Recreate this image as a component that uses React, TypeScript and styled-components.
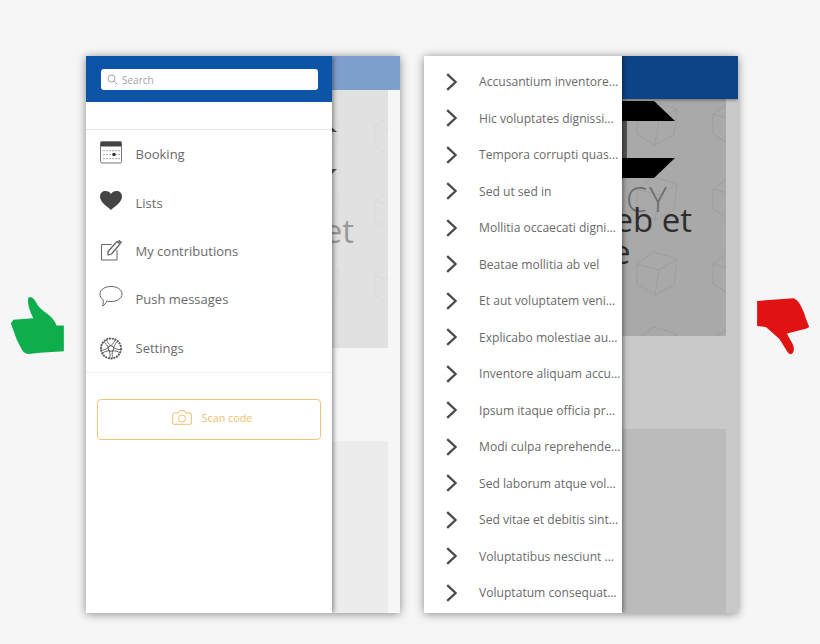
import React from "react";
import styled, { createGlobalStyle } from "styled-components";

const Global = createGlobalStyle`
  html, body { margin: 0; padding: 0; background: #f6f6f6; }
  body { font-family: "Open Sans", "Liberation Sans", sans-serif; }
`;

const Stage = styled.div`
  width: 820px;
  height: 644px;
  overflow: hidden;
  display: flex;
  align-items: flex-start;
  padding: 56px 0 0 10px;
  box-sizing: border-box;
`;
const ThumbUp = styled.svg`
  width: 55px;
  height: 59px;
  margin: 240px 21px 0 0;
  flex: none;
`;
const ThumbDown = styled.svg`
  width: 54px;
  height: 58px;
  margin: 241px 0 0 18px;
  flex: none;
`;
const Phone = styled.div<{ $dark?: boolean }>`
  position: relative;
  width: 314px;
  height: 557px;
  flex: none;
  overflow: hidden;
  display: flex;
  flex-direction: column;
  background: ${(p) => (p.$dark ? "#c9c9c9" : "#f6f6f6")};
`;
const PhoneFrame = styled.div<{ $gap?: boolean }>`
  flex: none;
  margin-right: ${(p) => (p.$gap ? "24px" : "0")};
  box-shadow: 0 1px 9px rgba(0, 0, 0, 0.45);
`;
const AppHeader = styled.div<{ $dark?: boolean }>`
  flex: none;
  height: ${(p) => (p.$dark ? "43px" : "34px")};
  background: ${(p) => (p.$dark ? "#0d4488" : "#7f9fcb")};
  box-shadow: ${(p) => (p.$dark ? "0 1px 3px rgba(0,0,0,.4)" : "none")};
  position: relative;
  z-index: 1;
`;
const Hero = styled.div<{ $dark?: boolean }>`
  flex: none;
  position: relative;
  overflow: hidden;
  margin: 0 12px;
  height: ${(p) => (p.$dark ? "237px" : "258px")};
  background: ${(p) => (p.$dark ? "#a9a9a9" : "#e1e1e1")};
  padding-top: ${(p) => (p.$dark ? "2px" : "22px")};
  box-sizing: border-box;
`;
const Cubes = styled.svg<{ $dark?: boolean }>`
  position: absolute;
  left: 0;
  top: ${(p) => (p.$dark ? "3px" : "24px")};
  width: 302px;
  height: 300px;
`;
const Logo = styled.svg`
  position: relative;
  display: block;
  width: 130px;
  height: 77px;
  margin-left: 109px;
`;
const Brand = styled.div<{ $dark?: boolean }>`
  position: relative;
  font-size: 34px;
  font-weight: 300;
  line-height: 40px;
  margin: 1px 0 0 190px;
  letter-spacing: 2px;
  color: ${(p) => (p.$dark ? "#6c6c6c" : "#bbb")};
`;
const Title = styled.div<{ $dark?: boolean }>`
  position: relative;
  font-size: 33px;
  line-height: 32px;
  margin: -15px 0 0 148px;
  width: 150px;
  color: ${(p) => (p.$dark ? "#2e2e2e" : "#999")};
`;
const Lower = styled.div<{ $dark?: boolean }>`
  flex: 1;
  margin: 93px 12px 0;
  background: ${(p) => (p.$dark ? "#bbbbbb" : "#ececec")};
`;
const Drawer = styled.nav<{ $wide?: boolean }>`
  position: absolute;
  top: 0;
  left: 0;
  bottom: 0;
  z-index: 2;
  width: ${(p) => (p.$wide ? "246px" : "198px")};
  background: #fff;
  box-shadow: 1px 0 5px rgba(0, 0, 0, 0.5);
  display: flex;
  flex-direction: column;
`;
const SearchBar = styled.div`
  flex: none;
  height: 46px;
  background: #0d53a6;
  padding: 13px 14px 12px 15px;
  box-sizing: border-box;
`;
const SearchField = styled.div`
  height: 21px;
  background: #fff;
  border-radius: 3px;
  display: flex;
  align-items: center;
  gap: 4px;
  padding-left: 6px;
  color: #a2a2a2;
  font-size: 10px;
`;
const Spacer = styled.div`
  flex: none;
  height: 27px;
  border-bottom: 1px solid #e4e4e4;
`;
const Menu = styled.div`
  flex: none;
  border-bottom: 1px solid #eeeeee;
`;
const MenuRow = styled.div`
  height: 48.4px;
  display: flex;
  align-items: center;
  gap: 12.5px;
  padding-left: 13px;
  font-size: 13px;
  color: #6a6a6a;
`;
const MenuIcon = styled.svg`
  width: 24px;
  height: 26px;
  flex: none;
`;
const ScanButton = styled.div`
  margin: 26px 11px 0;
  height: 41px;
  border: 1px solid #f2c57c;
  border-radius: 4px;
  box-sizing: border-box;
  display: flex;
  align-items: center;
  justify-content: center;
  gap: 10px;
  padding: 0 0 3px 6px;
  color: #f0bd70;
  font-size: 10.8px;
`;
const ChevronList = styled.div`
  padding-top: 7.5px;
`;
const ListRow = styled.div`
  height: 36.5px;
  display: flex;
  align-items: center;
  padding-left: 22px;
  gap: 22px;
  font-size: 12.1px;
  white-space: nowrap;
  color: #6a6a6a;
`;
const Chevron = styled.svg`
  width: 11px;
  height: 18px;
  flex: none;
`;

const items = [
  "Accusantium inventore…",
  "Hic voluptates dignissi…",
  "Tempora corrupti quas…",
  "Sed ut sed in",
  "Mollitia occaecati digni…",
  "Beatae mollitia ab vel",
  "Et aut voluptatem veni…",
  "Explicabo molestiae au…",
  "Inventore aliquam accu…",
  "Ipsum itaque officia pr…",
  "Modi culpa reprehende…",
  "Sed laborum atque vol…",
  "Sed vitae et debitis sint…",
  "Voluptatibus nesciunt …",
  "Voluptatum consequat…",
];

const cubeX = [-27, 49, 125, 201, 277];
const cubeY = [0, 75, 150, 225];

function Backdrop({ dark }: { dark?: boolean }) {
  const line = dark ? "#999999" : "#d8d8d8";
  const fill = dark ? "#000" : "#555";
  return (
    <>
      <AppHeader $dark={dark} />
      <Hero $dark={dark}>
        <Cubes $dark={dark} viewBox="0 0 302 300">
          {cubeY.map((y) =>
            cubeX.map((x) => (
              <g key={`${x}-${y}`} transform={`translate(${x} ${y})`} fill="none" stroke={line} strokeWidth="0.7">
                <path d="M0 12 L17 0 L40 7 L37 33 L18 43 L0 32 Z" />
                <path d="M0 12 L22 18 L40 7 M22 18 L18 43" />
              </g>
            ))
          )}
        </Cubes>
        <Logo viewBox="0 0 130 77">
          <path d="M0 0 H109 L130 20 H0 Z" fill={fill} />
          <path d="M0 57 H130 L109 77 H0 Z" fill={fill} />
          <rect x="50" y="20" width="32" height="37" fill={dark ? "#555" : "#888"} />
        </Logo>
        <Brand $dark={dark}>CY</Brand>
        <Title $dark={dark}>
          Web et
          <br />
          Vie
        </Title>
      </Hero>
      <Lower $dark={dark} />
    </>
  );
}

const gearSpokes = [0, 72, 144, 216, 288];

export default function App() {
  return (
    <>
      <Global />
      <Stage>
        <ThumbUp viewBox="30 33 165 178">
          <path
            d="M85 38 C92 32 102 40 108 52 C115 66 125 75 140 85 C155 95 165 108 170 122 L192 122 L192 200 L120 204 L85 208 C72 205 66 198 62 188 L50 165 L32 115 L40 105 L100 100 C92 85 80 55 85 38 Z"
            fill="#10ad4c"
          />
        </ThumbUp>
        <PhoneFrame $gap>
          <Phone>
            <Backdrop />
            <Drawer $wide>
              <SearchBar>
                <SearchField>
                  <svg width="11" height="11" viewBox="0 0 11 11" fill="none" stroke="#a2a2a2" strokeWidth="1">
                    <circle cx="4.5" cy="4.5" r="3.5" />
                    <path d="M7 7 L10.5 10.5" />
                  </svg>
                  Search
                </SearchField>
              </SearchBar>
              <Spacer />
              <Menu>
                <MenuRow>
                  <MenuIcon viewBox="0 0 24 26">
                    <rect x="1.5" y="1" width="21" height="21" rx="1.5" fill="#fff" stroke="#777" />
                    <rect x="1.5" y="0.5" width="21" height="5" fill="#444" />
                    <g fill="#888">
                      {[9, 13, 17].map((y) =>
                        [5, 8, 11, 14, 17, 20].map((x) => <rect key={`${x}-${y}`} x={x - 0.6} y={y} width="1.2" height="1.2" />)
                      )}
                    </g>
                    <circle cx="15" cy="13.5" r="1.7" fill="#333" />
                  </MenuIcon>
                  Booking
                </MenuRow>
                <MenuRow>
                  <MenuIcon viewBox="0 0 24 26">
                    <path
                      d="M12 20 C7 15.5 1 12 1 6.5 C1 3 3.5 1 6.5 1 C9 1 11 2 12 4 C13 2 15 1 17.5 1 C20.5 1 23 3 23 6.5 C23 12 17 15.5 12 20 Z"
                      fill="#444"
                    />
                  </MenuIcon>
                  Lists
                </MenuRow>
                <MenuRow>
                  <MenuIcon viewBox="0 0 24 26" fill="none" stroke="#666">
                    <path d="M12.5 6.5 H2.5 V22 H18 V12" />
                    <path d="M9 13.5 L9 17 L12.5 16 L21 6 L18 3.5 Z" strokeWidth="1.3" strokeLinejoin="round" />
                    <path d="M19.5 2.5 L22.5 5" strokeWidth="1.8" />
                  </MenuIcon>
                  My contributions
                </MenuRow>
                <MenuRow>
                  <MenuIcon viewBox="0 0 24 26" fill="none" stroke="#666">
                    <path d="M12 0.5 C18 0.5 23 3.5 23 8 C23 12.5 18 15.5 12 15.5 C10.5 15.5 9.5 15.5 8 15 C7 17 5.5 19 3.5 20 C4.5 18 4.5 15.5 4 13.5 C2 12 1 10.5 1 8 C1 3.5 6 0.5 12 0.5 Z" />
                  </MenuIcon>
                  Push messages
                </MenuRow>
                <MenuRow>
                  <MenuIcon viewBox="0 0 24 26" fill="none" stroke="#555">
                    <circle cx="12" cy="13.5" r="10" strokeWidth="1.8" strokeDasharray="2 0.8" />
                    <circle cx="12" cy="13.5" r="2.8" />
                    {gearSpokes.map((a) => (
                      <path
                        key={a}
                        d="M12 10.7 C10 9 8 7 7.5 5 M12 10.7 C14 9 15.5 7 16 5"
                        strokeWidth="0.8"
                        transform={`rotate(${a} 12 13.5)`}
                      />
                    ))}
                  </MenuIcon>
                  Settings
                </MenuRow>
              </Menu>
              <ScanButton>
                <svg width="20" height="15" viewBox="0 0 20 15" fill="none" stroke="#f0bd70">
                  <path d="M2 3 H6 L7.5 0.7 H12.5 L14 3 H18 Q19.3 3 19.3 4.3 V13 Q19.3 14.3 18 14.3 H2 Q0.7 14.3 0.7 13 V4.3 Q0.7 3 2 3 Z" strokeLinejoin="round" />
                  <circle cx="10" cy="8.5" r="3.6" />
                </svg>
                Scan code
              </ScanButton>
            </Drawer>
          </Phone>
        </PhoneFrame>
        <PhoneFrame>
          <Phone $dark>
            <Backdrop dark />
            <Drawer>
              <ChevronList>
                {items.map((t) => (
                  <ListRow key={t}>
                    <Chevron viewBox="0 0 11 18" fill="none" stroke="#4a4a4a" strokeWidth="2.3">
                      <path d="M1.2 1.2 L9.6 9 L1.2 16.8" />
                    </Chevron>
                    {t}
                  </ListRow>
                ))}
              </ChevronList>
            </Drawer>
          </Phone>
        </PhoneFrame>
        <ThumbDown viewBox="30 33 165 178">
          <path
            d="M33 45 L145 37 C155 40 162 50 168 62 C175 75 180 88 183 100 L193 125 L185 130 L125 145 C130 160 145 175 146 192 C146 204 140 210 133 208 C125 204 115 180 100 160 L60 125 L33 122 Z"
            fill="#e01212"
          />
        </ThumbDown>
      </Stage>
    </>
  );
}
